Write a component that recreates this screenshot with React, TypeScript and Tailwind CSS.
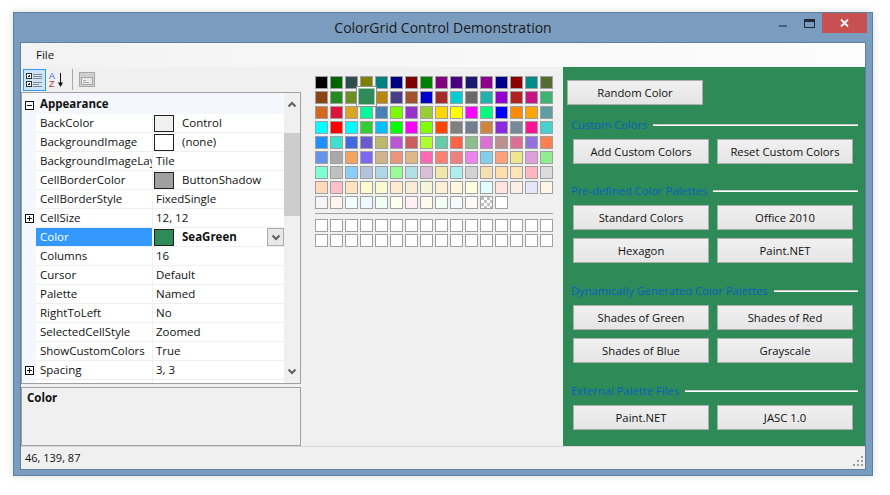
import type { ReactNode } from 'react'

const palette = [
  '#000000', '#006400', '#2f4f4f', '#808000', '#008080', '#000080', '#800000', '#008000', '#800080', '#4b0082', '#191970', '#8b008b', '#00008b', '#8b0000', '#008b8b', '#556b2f',
  '#8b4513', '#228b22', '#6b8e23', '#2e8b57', '#b8860b', '#483d8b', '#a0522d', '#0000cd', '#a52a2a', '#00ced1', '#696969', '#20b2aa', '#9400d3', '#b22222', '#c71585', '#3cb371',
  '#d2691e', '#dc143c', '#daa520', '#00fa9a', '#4682b4', '#7cfc00', '#9932cc', '#9acd32', '#ffd700', '#ffff00', '#ff00ff', '#00ff7f', '#0000ff', '#ff8c00', '#ffa500', '#5f9ea0',
  '#00ffff', '#ff0000', '#00ffff', '#32cd32', '#00bfff', '#00ff00', '#ff00ff', '#7fff00', '#ff4500', '#808080', '#708090', '#cd853f', '#8a2be2', '#778899', '#ff1493', '#48d1cc',
  '#1e90ff', '#40e0d0', '#4169e1', '#6a5acd', '#bdb76b', '#ba55d3', '#cd5c5c', '#adff2f', '#66cdaa', '#ff6347', '#8fbc8f', '#da70d6', '#bc8f8f', '#db7093', '#9370db', '#ff7f50',
  '#6495ed', '#a9a9a9', '#f4a460', '#7b68ee', '#d2b48c', '#e9967a', '#deb887', '#ff69b4', '#fa8072', '#f08080', '#ee82ee', '#87ceeb', '#ffa07a', '#f0e68c', '#dda0dd', '#90ee90',
  '#7fffd4', '#c0c0c0', '#87cefa', '#b0c4de', '#add8e6', '#98fb98', '#b0e0e6', '#d8bfd8', '#eee8aa', '#afeeee', '#d3d3d3', '#f5deb3', '#ffdead', '#ffe4b5', '#ffb6c1', '#dcdcdc',
  '#ffdab9', '#ffc0cb', '#ffe4c4', '#fffacd', '#fafad2', '#ffebcd', '#faebd7', '#f5f5dc', '#ffefd5', '#fff8dc', '#ffffe0', '#e0ffff', '#ffe4e1', '#faf0e6', '#e6e6fa', '#fdf5e6',
  '#f5f5f5', '#fff5ee', '#f0ffff', '#f0f8ff', '#f0fff0', '#fffff0', '#fff0f5', '#fffaf0', '#f5fffa', '#f8f8ff', '#fffafa', 'checker', '#ffffff',
]

const properties: { name: string; value: string; swatch?: string; expand?: boolean; selected?: boolean }[] = [
  { name: 'BackColor', value: 'Control', swatch: '#f0f0f0' },
  { name: 'BackgroundImage', value: '(none)', swatch: '#ffffff' },
  { name: 'BackgroundImageLayout', value: 'Tile' },
  { name: 'CellBorderColor', value: 'ButtonShadow', swatch: '#a0a0a0' },
  { name: 'CellBorderStyle', value: 'FixedSingle' },
  { name: 'CellSize', value: '12, 12', expand: true },
  { name: 'Color', value: 'SeaGreen', swatch: '#2e8b57', selected: true },
  { name: 'Columns', value: '16' },
  { name: 'Cursor', value: 'Default' },
  { name: 'Palette', value: 'Named' },
  { name: 'RightToLeft', value: 'No' },
  { name: 'SelectedCellStyle', value: 'Zoomed' },
  { name: 'ShowCustomColors', value: 'True' },
  { name: 'Spacing', value: '3, 3', expand: true },
]

function Chevron({ up }: { up?: boolean }) {
  return (
    <svg width="10" height="7" viewBox="0 0 10 7" fill="none" stroke="#606060" strokeWidth="2">
      <path d={up ? 'M1.5 5.5 5 2l3.5 3.5' : 'M1.5 1.5 5 5l3.5-3.5'} />
    </svg>
  )
}

function ExpandBox({ minus }: { minus?: boolean }) {
  return (
    <svg width="9" height="9" viewBox="0 0 9 9" fill="none" stroke="#111" shapeRendering="crispEdges">
      <rect x="0.5" y="0.5" width="8" height="8" fill="#fff" />
      <path d="M2 4.5h5" />
      {!minus && <path d="M4.5 2v5" />}
    </svg>
  )
}

function Row({ p }: { p: (typeof properties)[number] }) {
  return (
    <div className="flex h-[19px] shrink-0 text-[#111]">
      <div className="flex w-[14px] shrink-0 items-center justify-center bg-[#f4f7fc] pl-[1px]">
        {p.expand && <ExpandBox />}
      </div>
      <div className="flex min-w-0 flex-1 border-b border-[#f0f0f0]">
        <div
          className={`w-[116px] shrink-0 overflow-hidden whitespace-nowrap pl-[4px] leading-[18px] ${
            p.selected ? 'bg-[#3399ff] text-white' : ''
          }`}
        >
          {p.name}
        </div>
        <div className="flex min-w-0 flex-1 items-center border-l border-[#f0f0f0] pl-[1px]">
          {p.swatch ? (
            <>
              <span
                className="h-[17px] w-[20px] shrink-0 border border-[#222]"
                style={{ background: p.swatch }}
              />
              <span className={`ml-[8px] leading-[18px] ${p.selected ? 'font-bold' : ''}`}>{p.value}</span>
            </>
          ) : (
            <span className="ml-[2px] leading-[18px]">{p.value}</span>
          )}
          {p.selected && (
            <span className="ml-auto flex h-[18px] w-[17px] items-center justify-center border border-[#acacac] bg-[#e8e8e8]">
              <Chevron />
            </span>
          )}
        </div>
      </div>
    </div>
  )
}

function PropertyGrid() {
  return (
    <div className="flex h-[292px] border border-[#a0a0a0] bg-white">
      <div className="flex min-w-0 flex-1 flex-col overflow-hidden">
        <div className="flex h-[21px] shrink-0 bg-[#f4f7fc] font-bold text-[#111]">
          <div className="flex w-[14px] shrink-0 items-center justify-center pl-[1px] pt-[3px]">
            <ExpandBox minus />
          </div>
          <span className="pl-[4px] pt-[2px] leading-[18px]">Appearance</span>
        </div>
        {properties.map((p) => (
          <Row key={p.name} p={p} />
        ))}
        {/* next row, cut off by the scroll area */}
        <div className="flex h-[19px] shrink-0">
          <div className="w-[14px] shrink-0 bg-[#f4f7fc]" />
          <div className="ml-[116px] border-l border-[#f0f0f0]" />
        </div>
      </div>
      <div className="flex w-[16px] shrink-0 flex-col items-stretch bg-[#f0f0f0]">
        <div className="flex h-[17px] items-end justify-center pb-[2px]">
          <Chevron up />
        </div>
        <div className="mt-[23px] h-[83px] bg-[#cdcdcd]" />
        <div className="mt-auto flex h-[17px] items-start justify-center pt-[2px]">
          <Chevron />
        </div>
      </div>
    </div>
  )
}

function Toolbar() {
  return (
    <div className="flex h-[25px] items-center pl-[2px]">
      <div className="flex h-[22px] w-[23px] items-center justify-center border border-[#3399ff] bg-[#cce4f7]">
        <svg width="17" height="16" viewBox="0 0 17 16" shapeRendering="crispEdges" fill="none">
          <rect x="0.5" y="1.5" width="5" height="5" fill="#fff" stroke="#333" />
          <rect x="0.5" y="9.5" width="5" height="5" fill="#fff" stroke="#333" />
          <path d="M2 4h2M3 3v2M2 12h2M3 11v2" stroke="#111" />
          <path d="M7 2h9M7 4h9M7 6h9M7 10h9M7 12h6M7 14h9" stroke="#8a8a8a" />
        </svg>
      </div>
      <div className="ml-[3px] flex h-[22px] w-[17px] items-center">
        <div className="flex flex-col font-['Liberation_Sans',sans-serif] text-[9px] leading-[8px]">
          <span className="text-[#3a5fc4]">A</span>
          <span className="text-[#a33a3a]">Z</span>
        </div>
        <svg width="7" height="16" viewBox="0 0 7 16" className="ml-[2px]" fill="none">
          <path d="M3.5 1v12" stroke="#111" />
          <path d="M1 10.5h5L3.5 15z" fill="#111" />
        </svg>
      </div>
      <div className="ml-[6px] h-[21px] w-px bg-[#a8a8a8]" />
      <div className="ml-[6px] flex h-[22px] items-center">
        <svg width="16" height="15" viewBox="0 0 16 15" shapeRendering="crispEdges" fill="none">
          <rect x="0.5" y="0.5" width="15" height="14" fill="#d0d0d0" stroke="#a8a8a8" />
          <rect x="2.5" y="5.5" width="11" height="7" fill="#e8e8e8" stroke="#a8a8a8" />
          <path d="M4 8h3M4 10h6" stroke="#a8a8a8" />
        </svg>
      </div>
    </div>
  )
}

function Cell({ color }: { color: string }) {
  if (color === 'checker') {
    return (
      <svg width="13" height="13" viewBox="0 0 13 13" shapeRendering="crispEdges" fill="#c0c0c0">
        <rect x="0.5" y="0.5" width="12" height="12" fill="#fff" stroke="#a0a0a0" />
        <path d="M1 1h3v3H1zM7 1h3v3H7zM4 4h3v3H4zM10 4h2v3h-2zM1 7h3v3H1zM7 7h3v3H7zM4 10h3v2H4zM10 10h2v2h-2z" />
      </svg>
    )
  }
  return <div className="h-[13px] w-[13px] border border-[#a0a0a0]" style={{ background: color }} />
}

function ColorGrid() {
  return (
    <div className="w-[262px] pl-[14px] pt-[9px]">
      <div className="relative grid w-[238px] grid-cols-[repeat(16,13px)] gap-[2px]">
        {palette.map((c, i) => (
          <Cell key={i} color={c} />
        ))}
        {/* zoomed selected cell */}
        <div className="absolute left-[41px] top-[10px] h-[21px] w-[21px] border border-[#909090] bg-white p-[1px]">
          <div className="h-full w-full border border-[#a8c4b4] bg-[#2e8b57]" />
        </div>
      </div>
      <div className="mt-[4px] h-px w-[238px] bg-[#a0a0a0]" />
      <div className="mt-[5px] grid w-[238px] grid-cols-[repeat(16,13px)] gap-[2px]">
        {Array.from({ length: 32 }).map((_, i) => (
          <Cell key={i} color="#ffffff" />
        ))}
      </div>
    </div>
  )
}

function Btn({ children }: { children: ReactNode }) {
  return (
    <button className="h-[25px] w-[136px] border border-[#acacac] bg-gradient-to-b from-[#f0f0f0] to-[#e5e5e5] pt-[1px] text-center text-[11.3px] text-[#111]">
      {children}
    </button>
  )
}

function Section({ title, top, children }: { title: string; top: string; children: ReactNode }) {
  return (
    <div className={top}>
      <div className="flex h-[14px] items-center pl-[8px] pr-[7px]">
        <span className="whitespace-nowrap text-[11.2px] leading-[14px] text-[#0a5cc4]">{title}</span>
        <span className="ml-[6px] h-[2px] flex-1 border-t border-[#c8c8c8] bg-white" />
      </div>
      <div className="mt-[7px] grid grid-cols-[136px_136px] gap-x-[8px] gap-y-[8px] pl-[10px]">{children}</div>
    </div>
  )
}

function Actions() {
  return (
    <div className="w-[302px] bg-[#2e8b57] pt-[13px]">
      <div className="pl-[4px]">
        <Btn>Random Color</Btn>
      </div>
      <Section title="Custom Colors" top="mt-[13px]">
        <Btn>Add Custom Colors</Btn>
        <Btn>Reset Custom Colors</Btn>
      </Section>
      <Section title="Pre-defined Color Palettes" top="mt-[20px]">
        <Btn>Standard Colors</Btn>
        <Btn>Office 2010</Btn>
        <Btn>Hexagon</Btn>
        <Btn>Paint.NET</Btn>
      </Section>
      <Section title="Dynamically Generated Color Palettes" top="mt-[21px]">
        <Btn>Shades of Green</Btn>
        <Btn>Shades of Red</Btn>
        <Btn>Shades of Blue</Btn>
        <Btn>Grayscale</Btn>
      </Section>
      <Section title="External Palette Files" top="mt-[21px]">
        <Btn>Paint.NET</Btn>
        <Btn>JASC 1.0</Btn>
      </Section>
    </div>
  )
}

export default function App() {
  return (
    <div className="h-[495px] w-[890px] overflow-hidden bg-white pl-[13px] pt-[12px] font-['Open_Sans',sans-serif] text-[11.5px]">
      <div className="flex h-[464px] w-[860px] flex-col border border-[#5f7f9f] bg-[#7a9cbe] px-[6px] shadow-[0_0_8px_rgba(0,0,0,0.15)]">
        {/* title bar */}
        <div className="relative flex h-[29px] shrink-0 items-center justify-center text-[14px] text-[#1a1a1a]">
          ColorGrid Control Demonstration
          <div className="absolute right-[-1px] top-0 flex h-[20px] items-start">
            <svg width="10" height="3" viewBox="0 0 10 3" className="mr-[15px] mt-[12px]">
              <rect width="8" height="2" fill="#4a6076" />
            </svg>
            <svg width="11" height="9" viewBox="0 0 11 9" className="mr-[7px] mt-[6px]" fill="none" shapeRendering="crispEdges">
              <path d="M.5.5h10v8H.5z" stroke="#1f2a36" />
              <path d="M0 1.5h11" stroke="#1f2a36" strokeWidth="2" />
            </svg>
            <div className="flex h-[20px] w-[45px] items-center justify-center bg-[#c75050]">
              <svg width="9" height="8" viewBox="0 0 9 8" stroke="#fff" strokeWidth="1.8" fill="none">
                <path d="M1 .5l7 7M8 .5l-7 7" />
              </svg>
            </div>
          </div>
        </div>

        {/* client area */}
        <div className="flex w-[846px] flex-col border border-[#5f7f9f] bg-[#f0f0f0]">
          <div className="flex h-[24px] items-center bg-gradient-to-r from-[#f3f3f3] to-[#fcfcfc] pl-[15px] text-[#111]">File</div>
          <div className="flex h-[379px]">
            <div className="w-[280px] shrink-0">
              <Toolbar />
              <PropertyGrid />
              <div className="mt-[3px] h-[59px] border border-[#a0a0a0] pl-[5px] pt-[1px] font-bold text-[#111]">Color</div>
            </div>
            <ColorGrid />
            <Actions />
          </div>
          <div className="relative flex h-[23px] items-center border-t border-[#d7d7d7] pl-[4px] text-[11px] text-[#111]">
            46, 139, 87
            <svg width="11" height="11" viewBox="0 0 11 11" className="absolute bottom-[2px] right-[2px]" fill="#a0a0a0" shapeRendering="crispEdges">
              <path d="M9 0h2v2H9zM5 4h2v2H5zM9 4h2v2H9zM1 8h2v2H1zM5 8h2v2H5zM9 8h2v2H9z" />
            </svg>
          </div>
        </div>
      </div>
    </div>
  )
}
